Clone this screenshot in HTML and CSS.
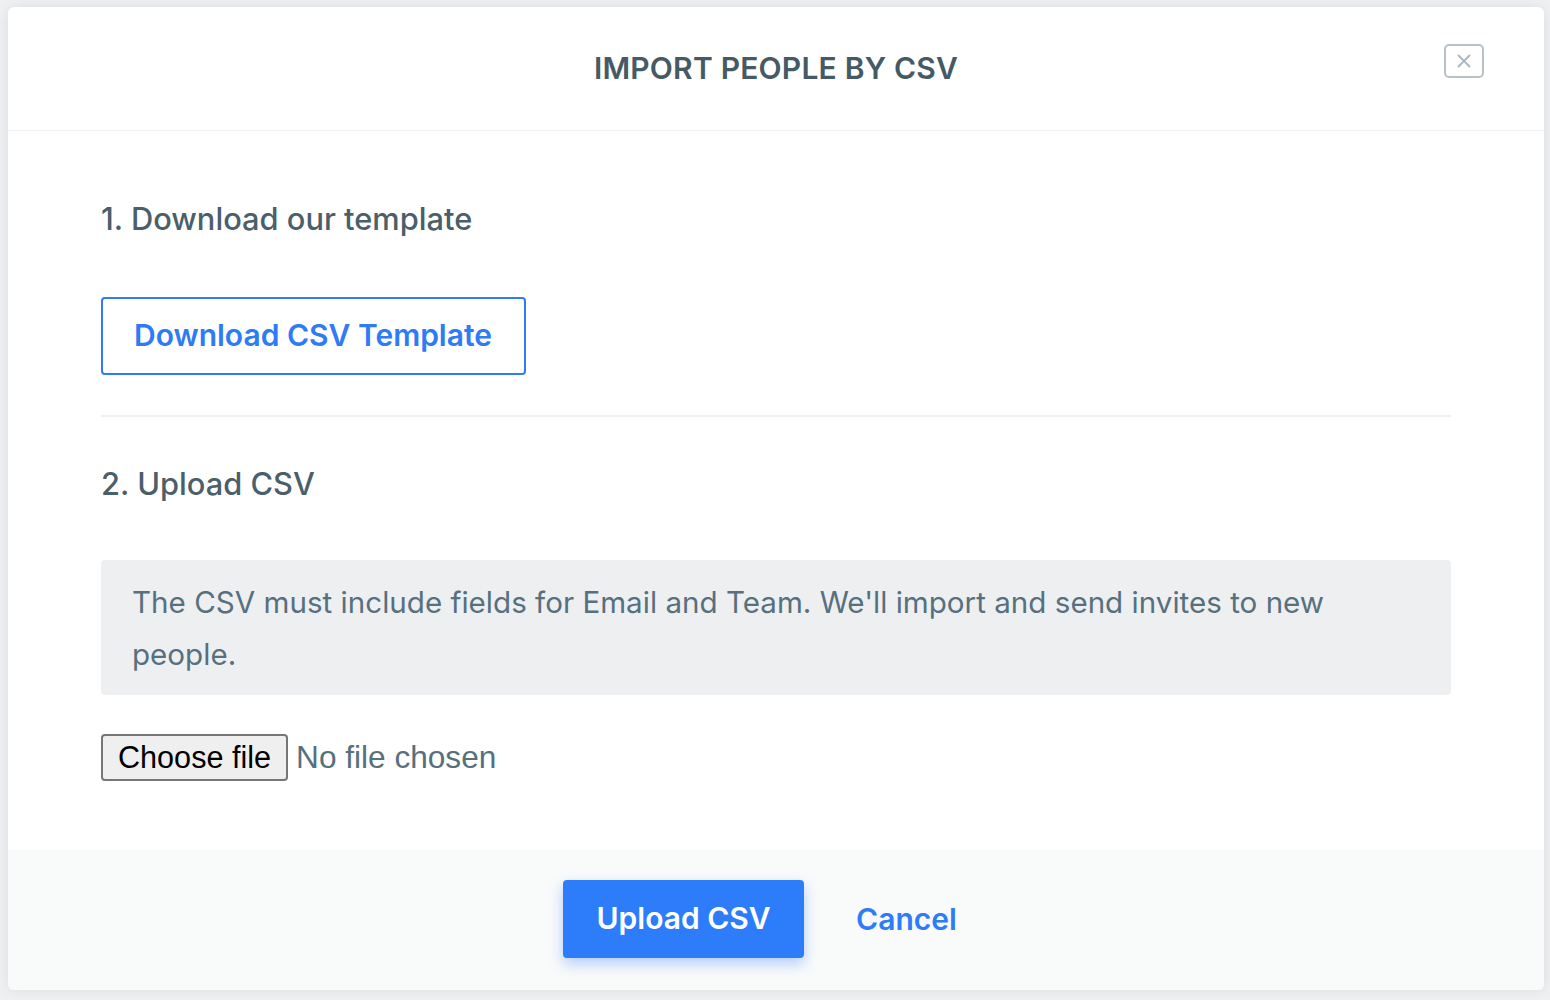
FILE: index.html
```html
<!DOCTYPE html>
<html>
<head>
<meta charset="utf-8">
<link rel="stylesheet" href="styles.css">
</head>
<body>
<div class="modal">
  <div class="modal-header">
    <h1 class="modal-title">IMPORT PEOPLE BY CSV</h1>
    <button class="close-btn" aria-label="Close">
      <svg width="16" height="16" viewBox="0 0 16 16"><path d="M2.5 2.5 L13.5 13.5 M13.5 2.5 L2.5 13.5" stroke="#a9b6bd" stroke-width="1.8" stroke-linecap="round" fill="none"/></svg>
    </button>
  </div>
  <div class="modal-body">
    <h2 class="step-title">1. Download our template</h2>
    <button class="btn-outline">Download CSV Template</button>
    <hr class="divider">
    <h2 class="step-title step-two">2. Upload CSV</h2>
    <div class="info-box">The CSV must include fields for Email and Team. We'll import and send invites to new people.</div>
    <div class="file-row">
      <span class="file-btn">Choose file</span>
      <span class="file-text">No file chosen</span>
    </div>
  </div>
  <div class="modal-footer">
    <button class="btn-primary">Upload CSV</button>
    <button class="btn-link">Cancel</button>
  </div>
</div>
</body>
</html>
```

FILE: styles.css
```css
* { box-sizing: border-box; }
html, body { margin: 0; height: 100%; }
body {
  background: #eef0f2;
  padding: 7px 6px 10px 8px;
  font-family: Inter, "Noto Sans", "Liberation Sans", sans-serif;
}
.modal {
  position: relative;
  height: 983px;
  background: #ffffff;
  border-radius: 6px;
  box-shadow: 0 0 14px rgba(0, 0, 0, 0.08);
  display: flex;
  flex-direction: column;
  overflow: hidden;
}
.modal-header {
  height: 124px;
  border-bottom: 1px solid #f2f3f4;
  display: flex;
  align-items: center;
  justify-content: center;
  flex-shrink: 0;
}
.modal-title {
  margin: 0;
  font-size: 30px;
  font-weight: 600;
  color: #455a64;
  letter-spacing: 0.2px;
  transform: translateY(-1px);
}
.close-btn {
  position: absolute;
  top: 37px;
  right: 60px;
  width: 40px;
  height: 34px;
  border: 2px solid #b7c2c8;
  border-radius: 5px;
  background: #fff;
  padding: 0;
  display: flex;
  align-items: center;
  justify-content: center;
}
.modal-body {
  flex: 1;
  padding: 68px 93px 0 93px;
}
.step-title {
  margin: 0;
  font-size: 30.8px;
  line-height: 40px;
  font-weight: 500;
  color: #4a5f6a;
}
.btn-outline {
  display: block;
  margin-top: 58px;
  height: 78px;
  padding: 0 32px 2px 31px;
  border: 2px solid #2f7bf5;
  border-radius: 4px;
  background: #fff;
  color: #2f7bf5;
  font-family: inherit;
  font-size: 30px;
  font-weight: 600;
}
.divider {
  margin: 40px 0 0 0;
  border: 0;
  height: 2px;
  background: #eff0f1;
}
.step-two { margin-top: 47px; }
.info-box {
  margin-top: 56px;
  background: #edeff1;
  border-radius: 4px;
  padding: 16px 100px 15px 31px;
  font-size: 29.6px;
  line-height: 52px;
  color: #56707e;
}
.file-row {
  margin-top: 39px;
  display: flex;
  align-items: center;
  gap: 8px;
}
.file-btn {
  height: 47px;
  padding: 0 15px;
  display: flex;
  align-items: center;
  background: #efefef;
  border: 2px solid #767676;
  border-radius: 4px;
  font-family: "Liberation Sans", Arial, sans-serif;
  font-size: 30.6px;
  color: #000;
}
.file-text {
  font-family: "Liberation Sans", Arial, sans-serif;
  font-size: 31.6px;
  color: #56707e;
}
.modal-footer {
  height: 140px;
  flex-shrink: 0;
  background: #f9fafa;
  display: flex;
  align-items: center;
  justify-content: center;
  gap: 52px;
  padding: 0 32px 2px 0;
}
.btn-primary {
  height: 78px;
  width: 241px;
  border: 0;
  border-radius: 4px;
  background: #2d7cf9;
  color: #fff;
  font-family: inherit;
  font-size: 30px;
  font-weight: 600;
  padding: 0 0 2px 0;
  box-shadow: 0 6px 14px rgba(45, 124, 249, 0.35);
}
.btn-link {
  border: 0;
  background: none;
  padding: 0;
  color: #2d7cf9;
  font-family: inherit;
  font-size: 30px;
  font-weight: 600;
}
```
